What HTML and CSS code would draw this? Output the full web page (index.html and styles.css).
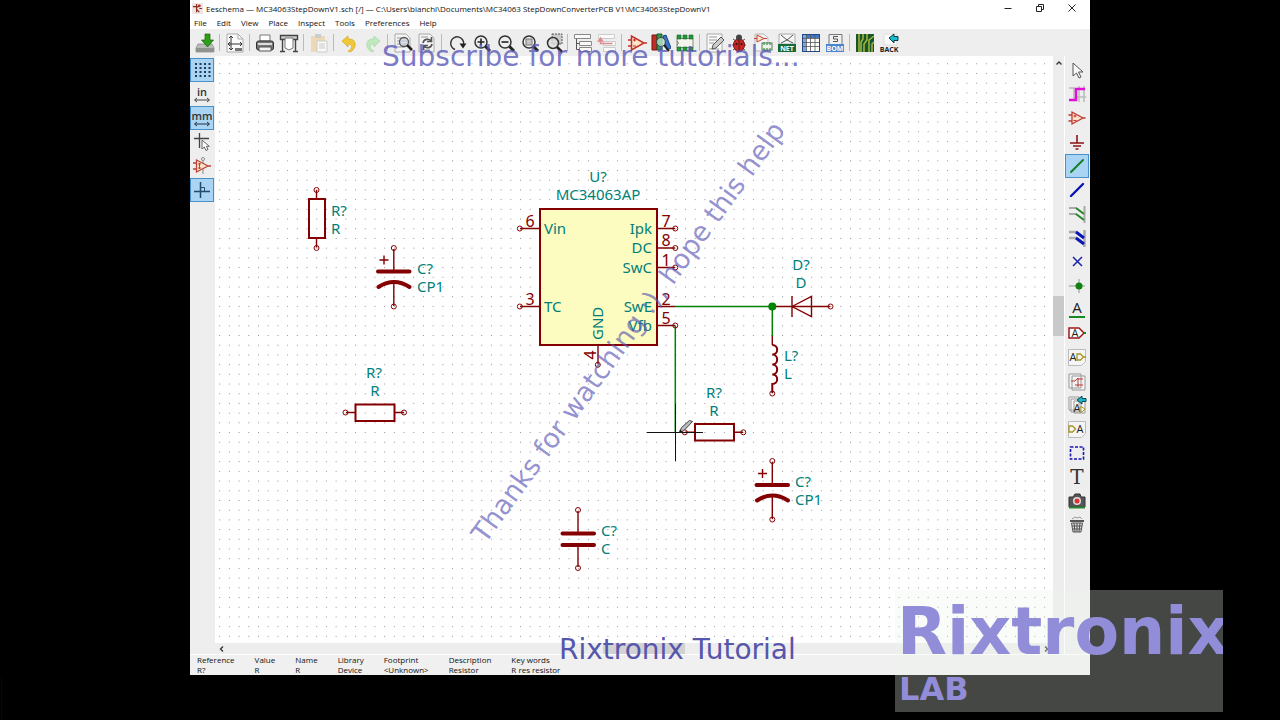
FILE: index.html
```html
<!DOCTYPE html>
<html lang="en">
<head>
<meta charset="utf-8">
<title>Eeschema — MC34063StepDownV1.sch</title>
<link rel="stylesheet" href="styles.css">
</head>
<body>
<div class="stage">
<main class="window">
  <header class="titlebar">
    <svg class="app-icon" viewBox="0 0 12 12"><rect width="12" height="12" fill="#eee6e2"/><path d="M1 4h4M5 1v9M5 5l4-2M5 7l3 3M8 6h3" stroke="#8c2a20" stroke-width="1.3" fill="none"/><circle cx="8" cy="3" r="1.5" fill="#a83428"/></svg>
    <h1 class="title">Eeschema — MC34063StepDownV1.sch [/] — C:\Users\bianchi\Documents\MC34063 StepDownConverterPCB V1\MC34063StepDownV1</h1>
    <div class="window-controls">
      <button aria-label="Minimize"><svg viewBox="0 0 10 10"><path d="M1.500 5.500h7"/></svg></button>
      <button aria-label="Restore"><svg viewBox="0 0 10 10"><path d="M1.500 3.500h5v5h-5zM3.500 3.500v-2h5v5h-2"/></svg></button>
      <button aria-label="Close"><svg viewBox="0 0 10 10"><path d="M1.500 1.500l7 7M8.500 1.500l-7 7"/></svg></button>
    </div>
  </header>
  <nav class="menubar">
    <button>File</button><button>Edit</button><button>View</button><button>Place</button><button>Inspect</button><button>Tools</button><button>Preferences</button><button>Help</button>
  </nav>
  <div class="toolbar">
    <button class="tool" aria-label="Save"><svg viewBox="0 0 20 20"><path d="M3 11h14l2 4v4H1v-4z" fill="#b9bcb9" stroke="#777" stroke-width=".6"/><path d="M1 15h18v4H1z" fill="#90948f"/><path d="M10 1h5v6h3.500l-6 7-6-7H10z" fill="#2f9e1c" stroke="#176009" stroke-width=".7"/></svg></button>
    <span class="sep"></span>
    <button class="tool" aria-label="Page settings"><svg viewBox="0 0 20 20"><path d="M2 1h11l5 5v13H2z" fill="#fafafa" stroke="#aaa"/><path d="M13 1v5h5" fill="none" stroke="#aaa"/><path d="M6 3v14M3 11h14M4 5l2-2 2 2M4 15l2 2 2-2M15 9l2 2-2 2M5 9l-2 2 2 2" fill="none" stroke="#333"/><path d="M10 15h7v3h-7z" fill="#777"/></svg></button>
    <span class="sep"></span>
    <button class="tool" aria-label="Print"><svg viewBox="0 0 20 20"><path d="M5 2h10v6H5z" fill="#fff" stroke="#777"/><rect x="1.500" y="8" width="17" height="9" rx="2" fill="#777" stroke="#333"/><path d="M3 10h14v2H3z" fill="#ddd"/><path d="M4 14h12v4H4z" fill="#f3f3f3" stroke="#555"/></svg></button>
    <button class="tool" aria-label="Plot"><svg viewBox="0 0 20 20"><path d="M1.500 2.500h17v4h-17zM3.500 6.500v12M16.500 6.500v12M1 18.500h5M14 18.500h5" fill="#ccc" stroke="#444" stroke-width="1.400"/><path d="M6 5h8v10l-4 2-4-2z" fill="#fff" stroke="#777"/></svg></button>
    <span class="sep"></span>
    <button class="tool" aria-label="Paste"><svg viewBox="0 0 20 20"><rect x="2" y="3" width="14" height="16" fill="#edd9b5"/><rect x="6" y="1" width="6" height="4" fill="#ccc"/><path d="M8 8h10v11H8z" fill="#f8f8f8" stroke="#ccc"/><path d="M10 11h6M10 13h6M10 15h6" stroke="#ccc"/></svg></button>
    <span class="sep"></span>
    <button class="tool" aria-label="Undo"><svg viewBox="0 0 20 20"><path d="M3 8l6-5v3c7-1 10 6 4 12-2 1-3 1-4 0 5-2 5-7 0-7v3z" fill="#f0c93a" stroke="#d6a518" stroke-width=".7"/></svg></button>
    <button class="tool" aria-label="Redo"><svg viewBox="0 0 20 20"><path d="M17 8l-6-5v3C4 5 1 12 7 18c2 1 3 1 4 0-5-2-5-7 0-7v3z" fill="#c0e7bd" stroke="#a8d9a6" stroke-width=".7"/></svg></button>
    <span class="sep"></span>
    <button class="tool" aria-label="Find"><svg viewBox="0 0 20 20"><path d="M2 1h11l4 4v14H2z" fill="#f4f4f4" stroke="#aaa"/><path d="M4 5h8M4 8h10M4 11h10M4 14h8" stroke="#999"/><circle cx="11" cy="9" r="4.500" fill="#cdd5e6" fill-opacity=".7" stroke="#555" stroke-width="1.300"/><path d="M14 12l5 5" stroke="#222" stroke-width="2.500"/></svg></button>
    <button class="tool" aria-label="Find and replace"><svg viewBox="0 0 20 20"><path d="M2 1h11l4 4v14H2z" fill="#f4f4f4" stroke="#aaa"/><path d="M4 4h7M4 17h9" stroke="#999"/><path d="M6 10a4.500 4.500 0 0 1 8-2M15 11a4.500 4.500 0 0 1-8 2M14.500 4v4.500H10M6.500 17v-4.500H11" fill="none" stroke="#555" stroke-width="1.600"/></svg></button>
    <span class="sep"></span>
    <button class="tool" aria-label="Refresh"><svg viewBox="0 0 20 20"><path d="M8 16.500A6.500 6.500 0 1 1 16.500 12" fill="none" stroke="#333" stroke-width="1.500"/><path d="M12.500 10.500h7l-3.500 5z" fill="#222"/></svg></button>
    <button class="tool" aria-label="Zoom in"><svg viewBox="0 0 20 20"><circle cx="10" cy="9" r="6" fill="#eee" stroke="#333" stroke-width="1.500"/><path d="M6.500 9h7M10 5.500v7" stroke="#222" stroke-width="1.600"/><path d="M14.500 13.500l4.500 4.500" stroke="#222" stroke-width="3"/></svg></button>
    <button class="tool" aria-label="Zoom out"><svg viewBox="0 0 20 20"><circle cx="10" cy="9" r="6" fill="#eee" stroke="#333" stroke-width="1.500"/><path d="M6.500 9h7" stroke="#222" stroke-width="1.600"/><path d="M14.500 13.500l4.500 4.500" stroke="#222" stroke-width="3"/></svg></button>
    <button class="tool" aria-label="Zoom to fit"><svg viewBox="0 0 20 20"><circle cx="10" cy="9" r="6" fill="#eee" stroke="#333" stroke-width="1.500"/><rect x="7" y="6" width="6" height="6" fill="#c4c4c4" stroke="#777"/><path d="M14.500 13.500l4.500 4.500" stroke="#222" stroke-width="3"/></svg></button>
    <button class="tool" aria-label="Zoom to selection"><svg viewBox="0 0 20 20"><rect x="9" y="1" width="10" height="10" fill="#ccc" stroke="#555" stroke-dasharray="2 1"/><circle cx="10" cy="10" r="5.500" fill="#ddd" fill-opacity=".8" stroke="#333" stroke-width="1.500"/><path d="M14 14l5 5" stroke="#222" stroke-width="2.600"/></svg></button>
    <span class="sep"></span>
    <button class="tool" aria-label="Hierarchy navigator"><svg viewBox="0 0 20 20"><path d="M1.500 1.500h16v4h-16zM6.500 8.500h12v4h-12zM6.500 14.500h12v4h-12z" fill="#fafafa" stroke="#888"/><path d="M3.500 6v10.500h3M3.500 10.500h3" fill="none" stroke="#555"/></svg></button>
    <button class="tool" aria-label="Leave sheet"><svg viewBox="0 0 20 20"><path d="M1.500 1.500h16v4h-16zM6.500 8.500h12v4h-12zM6.500 14.500h12v4h-12z" fill="#fafafa" stroke="#ccc"/><path d="M3.500 6v4.500h12M1.500 8l2-3 2 3z" fill="none" stroke="#dd8a90" stroke-width="1.500"/></svg></button>
    <span class="sep"></span>
    <button class="tool" aria-label="Symbol editor"><svg viewBox="0 0 20 20"><path d="M4.500 3v14L17 10zM1 7h3.500M1 13h3.500M17 10h3" fill="#fbe6c8" stroke="#c0302a" stroke-width="1.500"/><path d="M6 7h3M7.500 5.500v3M6 13h3" stroke="#c0302a"/></svg></button>
    <button class="tool" aria-label="Symbol library browser"><svg viewBox="0 0 20 20"><path d="M1 2h5v15H1z" fill="#c62c25" stroke="#701510"/><path d="M6 1h5v16H6z" fill="#2c9a50" stroke="#155c2c"/><path d="M12 3l3-1 5 13-4 2z" fill="#3a74c8" stroke="#1d4484"/><circle cx="10" cy="9" r="4.500" fill="#b9e0c8" fill-opacity=".8" stroke="#444"/><path d="M13 12l5 6" stroke="#222" stroke-width="2"/></svg></button>
    <button class="tool" aria-label="Footprint editor"><svg viewBox="0 0 20 20"><path d="M2 5.500h16v9H2z" fill="#f4f4ec" stroke="#8a8a80"/><path d="M2 2h4v4H2zM8 2h4v4H8zM14 2h4v4h-4zM2 14h4v4H2zM8 14h4v4H8zM14 14h4v4h-4z" fill="#22973a" stroke="#156326" stroke-width=".6"/><path d="M2 8q3 2 0 4" fill="none" stroke="#777"/></svg></button>
    <span class="sep"></span>
    <button class="tool" aria-label="Annotate"><svg viewBox="0 0 20 20"><path d="M2 1h15v18H2z" fill="#f9f9f9" stroke="#aaa"/><path d="M4 4h8M4 7h8M4 10h5M4 16h10" stroke="#999"/><path d="M7 16l1-4 8-8 3 3-8 8z" fill="#ccc" stroke="#555"/></svg></button>
    <button class="tool" aria-label="Electrical rules check"><svg viewBox="0 0 20 20"><path d="M4 6l3 2M16 6l-3 2M3 12h14M4 17l3-2M16 17l-3-2" stroke="#555"/><ellipse cx="10" cy="12" rx="5.500" ry="6.500" fill="#c52626" stroke="#771010"/><circle cx="10" cy="4.500" r="3" fill="#444"/><path d="M10 6v12" stroke="#661010"/><circle cx="7.500" cy="11" r="1" fill="#311"/><circle cx="12.500" cy="11" r="1" fill="#311"/></svg></button>
    <button class="tool" aria-label="Assign footprints"><svg viewBox="0 0 20 20"><path d="M2 1h9l4 4v13H2z" fill="#f3f3f3" stroke="#bbb"/><path d="M4 2v7l7-3.500zM1 5.500h3M11 5.500h3" fill="#fbe6c8" stroke="#c4423c"/><rect x="9" y="10" width="10" height="7" fill="#eef3ea" stroke="#557a58"/><path d="M11 9v3M14 9v3M17 9v3M11 15v3M14 15v3M17 15v3" stroke="#5fa06a" stroke-width="1.500"/></svg></button>
    <button class="tool" aria-label="Generate netlist"><svg viewBox="0 0 20 20"><path d="M2 1h16v10H2z" fill="#f5f5f5" stroke="#aaa"/><path d="M4 2l6 5 6-5M4 10l6-3 6 3" fill="none" stroke="#555"/><rect x="1" y="11" width="18" height="8" fill="#196b35"/><text x="10" y="18" class="icon-label" fill="#fff">NET</text></svg></button>
    <button class="tool" aria-label="Symbol fields table"><svg viewBox="0 0 20 20"><rect x="1.500" y="1.500" width="17" height="17" fill="#fff" stroke="#234a84"/><path d="M2 2h16v3H2z" fill="#3f78c8"/><path d="M2 2h3v16H2z" fill="#7fa6dc"/><path d="M2 5.500h16M2 9.500h16M2 13.500h16M5.500 2v16M9.500 2v16M14 2v16" stroke="#555" stroke-width=".8"/></svg></button>
    <button class="tool" aria-label="Bill of materials"><svg viewBox="0 0 20 20"><path d="M4 1.500h13v10H4z" fill="#f0f0f0" stroke="#777"/><path d="M13 3.500H8.500v2.500h4v2.500H8" fill="none" stroke="#555"/><rect x="1" y="11" width="18" height="8" fill="#4a86d0"/><text x="10" y="18" class="icon-label" fill="#fff">BOM</text></svg></button>
    <span class="sep"></span>
    <button class="tool" aria-label="Run PCB editor"><svg viewBox="0 0 20 20"><rect x="1" y="1" width="18" height="18" fill="#17562a"/><path d="M4 1v18M8 1v5l-2 3v10M12 1v6l-3 4v8M19 3l-5 4v12M19 9l-2 2v8" fill="none" stroke="#a9b83e" stroke-width="1.500"/></svg></button>
    <button class="tool" aria-label="Back"><svg viewBox="0 0 20 20"><path d="M5 1h13v11H5z" fill="#fafafa" stroke="#ddd"/><path d="M10 5l5-4v2.500h4v4h-4V10z" fill="#16bdd0" stroke="#103a44"/><text x="10" y="19" class="icon-label" fill="#222">BACK</text></svg></button>
  </div>
  <div class="workspace">
    <div class="rail">
      <button class="tool on" aria-label="Show grid" aria-pressed="true"><svg viewBox="0 0 20 20"><path d="M3 4h16M3 8h16M3 12h16M3 16h16" stroke="#223a58" stroke-width="2" stroke-dasharray="2 2.500"/></svg></button>
      <button class="tool" aria-label="Inches"><svg viewBox="0 0 20 20"><text x="10" y="12" class="unit">in</text><path d="M3 16h14M5 14l-2.500 2L5 18M15 14l2.500 2-2.500 2" fill="none" stroke="#444"/></svg></button>
      <button class="tool on" aria-label="Millimetres" aria-pressed="true"><svg viewBox="0 0 20 20"><text x="10" y="12" class="unit">mm</text><path d="M3 16h14M5 14l-2.500 2L5 18M15 14l2.500 2-2.500 2" fill="none" stroke="#234"/></svg></button>
      <button class="tool" aria-label="Cursor shape"><svg viewBox="0 0 20 20"><path d="M2 6.500h15M7.500 1v15" stroke="#444" stroke-width="1.300"/><path d="M10 8v9l2.300-2 1.700 3.500 2-1-1.700-3.200h3z" fill="#fff" stroke="#666"/></svg></button>
      <button class="tool" aria-label="Show hidden pins"><svg viewBox="0 0 20 20"><path d="M4.500 4v12L16 10zM1 7h3.500M1 13h3.500M16 10h3" fill="#fbe6c8" stroke="#bd4436" stroke-width="1.300"/><path d="M11 3v4M11 13v5" stroke="#888"/><circle cx="11" cy="3" r="1.500" fill="#fff" stroke="#888"/><path d="M6 8h3M6 12h3M7.500 7v6" stroke="#bd4436"/></svg></button>
      <button class="tool on" aria-label="Right angle wires" aria-pressed="true"><svg viewBox="0 0 20 20"><path d="M2 11.500h16M8.500 2v16" stroke="#234a6c" stroke-width="1.500"/><path d="M9 7.500h3.500v4" fill="none" stroke="#234a6c"/></svg></button>
    </div>
    <div class="sheet">
      <svg class="schematic" role="img" aria-label="Schematic sheet">
        <defs><pattern id="grid" x="675.300" y="325.300" width="9.705" height="9.705" patternUnits="userSpaceOnUse"><rect width="1" height="1" fill="#94949c"/></pattern></defs>
        <g transform="translate(-215 -56)">
          <rect x="218" y="60" width="100%" height="100%" fill="url(#grid)"/>
          <rect x="540" y="209" width="117" height="136" fill="#fcfbc0" stroke="#840000" stroke-width="2"/>
          <g class="part">
            <path d="M316.500 190v9M316.500 238v9.500M346 412.500h9M395 412.500h9M685 432.300h10M734 432.300h9M520 228.500h20M520 306.500h20M657 228.500h18M657 248h18M657 267.500h18M657 306.500h18M657 325.500h18M598 345v19M393.800 249v22M393.800 283v23M578 511v22M578 545v22M772.300 462v22M772.300 496v23M772.300 306.500h58M772.300 335v10"/>
            <path stroke-width="2" d="M772.300 345c6.500 0 6.500 9.500 0 9.500c6.500 0 6.500 10 0 10c6.500 0 6.500 10 0 10c6.500 0 6.500 9.500 0 9.500v9"/>
            <path d="M792 296v21M792 306.500l19.500-10v20z"/>
            <path d="M379.500 260h9M384 255.500v9M758 473.500h9M762.500 469v9"/>
            <g stroke-width="2"><rect x="309" y="199" width="16" height="39"/><rect x="355.500" y="404.500" width="39" height="16.500"/><rect x="695" y="424" width="39" height="16.500"/></g>
            <path class="plate" d="M378 271.500h31.500M562.500 533.500h31.500M562.500 545h31.500M756.500 485h31.500M378.500 287q15.500-10 31 0M757 500.500q15.500-10 31 0"/>
          </g>
          <path class="wire" d="M675 306.500h97.300V336M675.300 325.500v107"/>
          <circle cx="772.300" cy="306.500" r="4" fill="#008400"/>
          <g class="pin">
            <circle cx="316.500" cy="190" r="2.500"/><circle cx="316.500" cy="248" r="2.500"/><circle cx="393.800" cy="248" r="2.500"/><circle cx="393.800" cy="306.500" r="2.500"/>
            <circle cx="345.500" cy="412.500" r="2.500"/><circle cx="404" cy="412.500" r="2.500"/><circle cx="684.800" cy="432.300" r="2.500"/><circle cx="743.300" cy="432.300" r="2.500"/>
            <circle cx="519.800" cy="228.500" r="2.500"/><circle cx="519.800" cy="306.500" r="2.500"/><circle cx="675.300" cy="228.500" r="2.500"/><circle cx="675.300" cy="248" r="2.500"/><circle cx="675.300" cy="267.500" r="2.500"/><circle cx="675.300" cy="325.500" r="2.500"/><circle cx="597.800" cy="364.800" r="2.500"/>
            <circle cx="578" cy="510" r="2.500"/><circle cx="578" cy="568" r="2.500"/><circle cx="772.300" cy="461" r="2.500"/><circle cx="772.300" cy="519.500" r="2.500"/><circle cx="772.300" cy="393.500" r="2.500"/><circle cx="830.500" cy="306.500" r="2.500"/>
          </g>
          <g class="field">
            <text x="331" y="216">R?</text><text x="331" y="234">R</text>
            <text x="417" y="274">C?</text><text x="417" y="292">CP1</text>
            <text x="784" y="361">L?</text><text x="784" y="379">L</text>
            <text x="795" y="487">C?</text><text x="795" y="505">CP1</text>
            <text x="601" y="536">C?</text><text x="601" y="554">C</text>
            <text x="544" y="234">Vin</text><text x="544" y="312">TC</text>
            <g text-anchor="middle">
              <text x="374" y="378">R?</text><text x="375" y="396">R</text>
              <text x="598" y="182">U?</text><text x="598" y="200">MC34063AP</text>
              <text x="801" y="270">D?</text><text x="801" y="288">D</text>
              <text x="714" y="398">R?</text><text x="714" y="416">R</text>
            </g>
            <g text-anchor="end">
              <text x="652" y="234">Ipk</text><text x="652" y="253">DC</text><text x="652" y="273">SwC</text><text x="652" y="312">SwE</text><text x="652" y="331">Vfb</text>
            </g>
            <text transform="translate(603 340) rotate(-90)">GND</text>
          </g>
          <g class="pin-number" text-anchor="middle">
            <text x="530" y="227">6</text><text x="530" y="305">3</text><text x="666" y="227">7</text><text x="666" y="246">8</text><text x="666" y="266">1</text><text x="666" y="305">2</text><text x="666" y="324">5</text>
            <text transform="translate(596 355) rotate(-90)">4</text>
          </g>
          <path d="M647 432.500h56M675.500 404v57" stroke="#111" stroke-width="1"/>
          <path d="M679.500 432.500l2-5 8-7 3 1-8.500 9z" fill="#bbb" stroke="#444"/><path d="M679 433l3-1.500-2-2z" fill="#111"/>
        </g>
      </svg>
      <div class="scroll-v"><svg class="arrow" viewBox="0 0 8 8"><path d="M1.500 5.500L4 3l2.500 2.500"/></svg><div class="thumb-v"></div></div>
      <div class="scroll-h"><svg class="arrow" viewBox="0 0 8 8"><path d="M5 1.500L2.500 4 5 6.500"/></svg><div class="thumb-h"></div><svg class="arrow" viewBox="0 0 8 8"><path d="M3 1.500L5.500 4 3 6.500"/></svg></div>
    </div>
    <div class="rail rail-right">
      <button class="tool" aria-label="Select"><svg viewBox="0 0 20 20"><path d="M6 3v13l3.500-3 2.500 5 2-1-2.500-5H16z" fill="#f8f8f8" stroke="#555"/></svg></button>
      <button class="tool" aria-label="Highlight net"><svg viewBox="0 0 20 20"><path d="M2 4h5v12M12 2v16M17 2v16M10 13h9" fill="none" stroke="#bbb" stroke-width="1.500"/><path d="M2 16h7V5h9" fill="none" stroke="#e010d8" stroke-width="2.500"/></svg></button>
      <button class="tool" aria-label="Place symbol"><svg viewBox="0 0 20 20"><path d="M5 4v12l11-6zM1.500 7H5M1.500 13H5M16 10h2.500" fill="#fbe2c8" stroke="#bd3a30" stroke-width="1.300"/><path d="M6.500 8h3M8 6.500v3M6.500 12.500h3" stroke="#bd3a30"/></svg></button>
      <button class="tool" aria-label="Place power port"><svg viewBox="0 0 20 20"><path d="M10 3v8M3 11h14M6 14h8M8.500 17h3" stroke="#8c1414" stroke-width="1.600"/></svg></button>
      <button class="tool on" aria-label="Place wire" aria-pressed="true"><svg viewBox="0 0 20 20"><path d="M4 16L16 4" stroke="#168020" stroke-width="2" stroke-linecap="round"/></svg></button>
      <button class="tool" aria-label="Place bus"><svg viewBox="0 0 20 20"><path d="M4 16L16 4" stroke="#0a14b4" stroke-width="2.400" stroke-linecap="round"/></svg></button>
      <button class="tool" aria-label="Wire to bus entry"><svg viewBox="0 0 20 20"><path d="M2 4h8M2 10h8M17.500 2v17" stroke="#aaa" stroke-width="2"/><path d="M9 4l8 6M9 10l8 6" stroke="#22862a" stroke-width="2"/></svg></button>
      <button class="tool" aria-label="Bus to bus entry"><svg viewBox="0 0 20 20"><path d="M2 4h8M2 10h8M17.500 2v17" stroke="#aaa" stroke-width="2.500"/><path d="M9 4l8 6M9 10l8 6" stroke="#0a14b4" stroke-width="3"/></svg></button>
      <button class="tool" aria-label="No connect"><svg viewBox="0 0 20 20"><path d="M6 5l9 9M15 5l-9 9" stroke="#1a24a8" stroke-width="1.500"/></svg></button>
      <button class="tool" aria-label="Junction"><svg viewBox="0 0 20 20"><path d="M2 10h16M12 3v14" stroke="#aab8a8" stroke-width="1.500"/><circle cx="12" cy="10" r="3.500" fill="#108010"/></svg></button>
      <button class="tool" aria-label="Net label"><svg viewBox="0 0 20 20"><text x="10" y="13" class="glyph">A</text><path d="M2 17h16" stroke="#178a24" stroke-width="2"/></svg></button>
      <button class="tool" aria-label="Global label"><svg viewBox="0 0 20 20"><path d="M2 4h10l5 5-5 5H2z" fill="#fff" stroke="#a01818" stroke-width="1.500"/><path d="M17 9h2" stroke="#178a24" stroke-width="2"/><text x="8" y="13" class="small-glyph">A</text></svg></button>
      <button class="tool" aria-label="Hierarchical label"><svg viewBox="0 0 20 20"><path d="M1.500 1.500h17v12l-4 4h-13z" fill="#f5f5f5" stroke="#bbb"/><text x="6" y="13" class="small-glyph">A</text><path d="M10 6h3.500l3 3-3 3H10zM16.500 9H19" fill="none" stroke="#a89520" stroke-width="1.300"/></svg></button>
      <button class="tool" aria-label="Place sheet"><svg viewBox="0 0 20 20"><path d="M2 2h12v14H2zM5 4h13v14H5z" fill="#f3f3f3" stroke="#999"/><path d="M4 9h4l3-3v9M8 13h8M11 7h5" fill="none" stroke="#b43a34"/></svg></button>
      <button class="tool" aria-label="Import sheet pin"><svg viewBox="0 0 20 20"><path d="M2 1h10v13H2zM4 3h10v13H4zM7 5h11v12H7z" fill="#f7f7f7" stroke="#999"/><path d="M10 4l5-4v2.500h4v3h-4V8z" fill="#16b8c8" stroke="#145"/><text x="10" y="16" class="small-glyph">A</text><path d="M13 11h2l3 2-3 3h-2z" fill="none" stroke="#a89520"/></svg></button>
      <button class="tool" aria-label="Sheet pin"><svg viewBox="0 0 20 20"><path d="M1.500 1.500h17v12l-4 4h-13z" fill="#f5f5f5" stroke="#bbb"/><path d="M2 6h3.500l3 3-3 3H2z" fill="none" stroke="#a89520" stroke-width="1.300"/><text x="13" y="13" class="small-glyph">A</text></svg></button>
      <button class="tool" aria-label="Graphic lines"><svg viewBox="0 0 20 20"><rect x="3.500" y="3" width="13" height="12" fill="none" stroke="#1616b4" stroke-width="1.600" stroke-dasharray="3 1.500"/></svg></button>
      <button class="tool" aria-label="Text"><svg viewBox="0 0 20 20"><text x="10" y="16" class="serif-glyph">T</text></svg></button>
      <button class="tool" aria-label="Image"><svg viewBox="0 0 20 20"><path d="M2 5h4l2-3h5l1 3h4v10H2z" fill="#555" stroke="#333"/><path d="M2 15.500h16" stroke="#2d8535" stroke-width="2"/><circle cx="10" cy="9" r="4" fill="#ddd"/><circle cx="10" cy="9" r="2.500" fill="#d33"/></svg></button>
      <button class="tool" aria-label="Delete"><svg viewBox="0 0 20 20"><path d="M5 3l3-2 2 1 3-1 2 2" fill="none" stroke="#999"/><path d="M3 5h14" stroke="#555" stroke-width="2"/><path d="M4.500 7h11l-1.500 9H6z" fill="#ddd" stroke="#555"/><path d="M7 7l1 9M10 7v9M13 7l-1 9M5 10h10M5.500 13h9" stroke="#555"/></svg></button>
    </div>
  </div>
  <footer>
    <dl class="status">
      <div><dt>Reference</dt><dd>R?</dd></div>
      <div><dt>Value</dt><dd>R</dd></div>
      <div><dt>Name</dt><dd>R</dd></div>
      <div><dt>Library</dt><dd>Device</dd></div>
      <div><dt>Footprint</dt><dd>&lt;Unknown&gt;</dd></div>
      <div><dt>Description</dt><dd>Resistor</dd></div>
      <div><dt>Key words</dt><dd>R res resistor</dd></div>
    </dl>
  </footer>
</main>
<p class="caption caption-top">Subscribe for more tutorials...</p>
<p class="caption caption-diagonal">Thanks for watching :), hope this help</p>
<p class="caption caption-bottom">Rixtronix Tutorial</p>
<aside class="brand"><span class="brand-name">Rixtronix</span><span class="brand-sub">LAB</span></aside>
<div class="edge"></div>
</div>
</body>
</html>
```
FILE: styles.css
```css
* { box-sizing: border-box; }
body { margin: 0; background: #000; font-family: "Open Sans", "Noto Sans", sans-serif; font-size: 8px; color: #111; }
button { font: inherit; color: inherit; border: 0; background: none; padding: 0; margin: 0; }

.stage { position: relative; display: flex; min-height: 100vh; padding: 0 190px 45px; overflow: hidden; }
.window { flex: 1; min-width: 0; display: flex; flex-direction: column; background: #fff; }

.titlebar { display: flex; align-items: center; height: 17px; padding-left: 2px; }
.app-icon { width: 11px; height: 11px; margin-right: 3px; }
.title { margin: 0; flex: 1; font-size: 8px; font-weight: 400; line-height: 16px; white-space: nowrap; overflow: hidden; }
.window-controls { display: flex; padding: 0 2px 2px 0; }
.window-controls button { display: flex; justify-content: center; align-items: center; width: 32px; height: 15px; }
.window-controls svg { width: 10px; height: 10px; fill: none; stroke: #222; }

.menubar { display: flex; gap: 10px; height: 12px; padding-left: 4px; line-height: 12px; }

.toolbar { display: flex; align-items: center; height: 27px; padding-left: 3px; background: #eee; }
.sep { width: 1px; height: 17px; margin: 0 3px 0 2px; background: #bbb; }
.tool { display: flex; flex: none; align-items: center; justify-content: center; width: 24px; height: 24px; }
.tool svg { width: 20px; height: 20px; }
.tool.on { background: #a9d4f3; border: 1px solid #4a90c8; }
.icon-label { font: 700 7px "Open Sans", sans-serif; text-anchor: middle; }
.unit { font: 600 11px "Open Sans", sans-serif; text-anchor: middle; fill: #333; }
.glyph { font: 400 15px "Open Sans", sans-serif; text-anchor: middle; fill: #222; }
.small-glyph { font: 400 11px "Open Sans", sans-serif; text-anchor: middle; fill: #222; }
.serif-glyph { font: 400 20px "DejaVu Serif", serif; text-anchor: middle; fill: #333; }

.workspace { flex: 1; display: flex; }
.rail { display: flex; flex-direction: column; align-items: flex-start; width: 25px; padding-top: 2px; background: #eee; }
.rail-right { width: 26px; border-left: 1px solid #fff; }
.sheet { flex: 1; min-width: 0; display: grid; grid-template-columns: minmax(0, 1fr) 11px; grid-template-rows: minmax(0, 1fr) 11px; }
.schematic { width: 100%; height: 100%; display: block; overflow: hidden; }
.part { fill: none; stroke: #840000; stroke-width: 1.4; }
.part .plate { stroke-width: 4; stroke-linecap: round; }
.wire { fill: none; stroke: #008400; stroke-width: 1.5; }
.pin { fill: none; stroke: #840000; stroke-width: 1; }
.field { font: 15px "Noto Sans", sans-serif; fill: #007f7a; }
.pin-number { font: 16px "Noto Sans", sans-serif; fill: #840000; }
.scroll-v { display: flex; flex-direction: column; align-items: center; padding-top: 3px; background: #ededed; }
.thumb-v { width: 11px; height: 40px; margin-top: 229px; background: #c9c9c9; }
.scroll-h { grid-column: 1 / -1; display: flex; align-items: center; justify-content: space-between; padding: 0 14px 0 3px; background: #ededed; }
.thumb-h { width: 82px; height: 11px; margin-left: 20px; background: #d2d2d2; }
.arrow { width: 8px; height: 8px; fill: none; stroke: #333; stroke-width: 1.3; }

.status { display: flex; gap: 20px; margin: 0; padding: 0 7px; line-height: 10px; background: #f0f0f0; border-top: 1px solid #fff; }
.status dd { margin: 0; }

.caption { position: absolute; margin: 0; white-space: nowrap; font: 28px/28px "DejaVu Sans", sans-serif; color: rgb(88 88 184 / .8); }
.caption-top { left: 382px; top: 43px; }
.caption-bottom { left: 559px; top: 636px; color: #5656ac; }
.caption-diagonal { left: 486px; top: 521px; font-size: 27px; transform-origin: 0 24px; transform: rotate(-54deg); color: rgb(88 84 180 / .65); }

.brand { position: absolute; right: 57px; bottom: 8px; display: flex; flex-direction: column; width: 328px; height: 122px; overflow: hidden; padding-top: 9px; background: rgb(238 246 238 / .29); color: #918dd8; font-family: "DejaVu Sans", sans-serif; font-weight: 700; }
.brand-name { padding-left: 2px; font-size: 65px; line-height: 66px; }
.brand-sub { padding-left: 4px; font-size: 32px; line-height: 48px; }
.edge { position: absolute; left: 1px; bottom: 0; width: 1px; height: 43px; background: #00003c; }
```
